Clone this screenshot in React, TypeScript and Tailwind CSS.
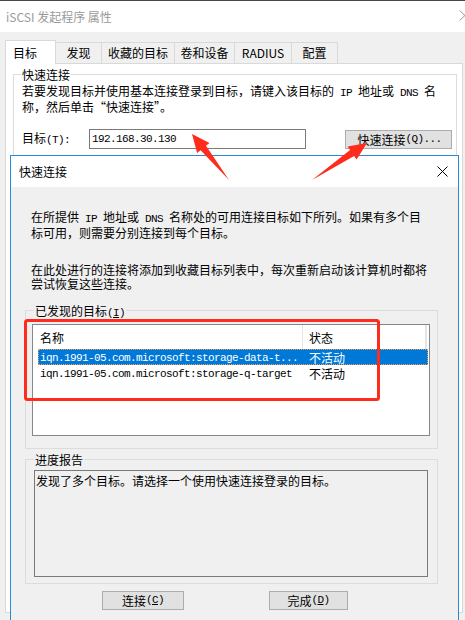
import React from 'react';

// mono run: SimSun-like half-width latin (6px advance)
const M: React.FC<{ children: React.ReactNode }> = ({ children }) => (
  <span className="font-['Liberation_Mono',monospace] text-[11px] tracking-[-0.6px]">{children}</span>
);

const TABS = [
  { label: '发现', w: 'w-[46px]' },
  { label: '收藏的目标', w: 'w-[73px]' },
  { label: '卷和设备', w: 'w-[60px]' },
  { label: 'RADIUS', w: 'w-[57px]' },
  { label: '配置', w: 'w-[46px]' },
];

const TARGETS = [
  { name: 'iqn.1991-05.com.microsoft:storage-data-t...', status: '不活动', selected: true },
  { name: 'iqn.1991-05.com.microsoft:storage-q-target', status: '不活动', selected: false },
];

const App: React.FC = () => {
  return (
    <div className="relative w-[465px] h-[620px] overflow-hidden bg-[#f0f0f0] text-black text-[12px] leading-[13px] font-['Noto_Sans_CJK_SC',sans-serif]">
      {/* Outer window title */}
      <div className="h-[32px] bg-white border-t border-[#474747] flex items-center pl-[6px] text-[#9a9a9a] text-[12px]">
        iSCSI 发起程序 属性
      </div>

      {/* Tabs */}
      <div className="mt-[8px] ml-[5px] h-[24px] -mb-px flex items-end relative z-10">
        <div className="w-[51px] h-[24px] bg-white border-x border-t border-[#d9d9d9] pl-[7px] pt-[4px] leading-[16px]">目标</div>
        {TABS.map((t) => (
          <div key={t.label} className={`${t.w} h-[21px] mb-px border-t border-r border-[#d9d9d9] flex items-center justify-center leading-[16px]`}>
            {t.label}
          </div>
        ))}
      </div>

      {/* Tab panel */}
      <div className="ml-[5px] w-[458px] h-[550px] bg-white border border-[#d9d9d9] pt-[10px] pl-[7px]">
        <div className="relative w-[444px] h-[200px] border border-[#dcdcdc] pt-[9px] pl-[8px]">
          <span className="absolute -top-[7px] left-[7px] bg-white px-px leading-[13px]">快速连接</span>
          <div className="whitespace-nowrap">
            <div>若要发现目标并使用基本连接登录到目标，请键入该目标的<M> IP </M>地址或<M> DNS </M>名</div>
            <div>称，然后单击“快速连接”。</div>
          </div>
          <div className="mt-[16px] flex items-center">
            <span className="w-[67px]">目标<M>(T):</M></span>
            <div className="w-[217px] h-[20px] border border-[#7a7a7a] bg-white flex items-center pl-[2px]">
              <M>192.168.30.130</M>
            </div>
            <button className="ml-[39px] w-[107px] h-[19px] bg-[#e1e1e1] border border-[#adadad] flex items-center justify-center pl-[2px]">
              快速连接<M>(Q)...</M>
            </button>
          </div>
        </div>
      </div>

      {/* Quick connect dialog */}
      <div className="absolute left-[10px] top-[155px] w-[449px] h-[480px] border border-[#2b8ad6] bg-[#f0f0f0]">
        <div className="h-[31px] bg-white flex items-center justify-between pl-[8px] pr-[10px]">
          <span className="leading-[16px]">快速连接</span>
          <svg width="11" height="11" viewBox="0 0 11 11">
            <path d="M0.5 0.5 L10.5 10.5 M10.5 0.5 L0.5 10.5" stroke="#000" strokeWidth="1" fill="none" />
          </svg>
        </div>

        <div className="pt-[23px] pl-[20px] whitespace-nowrap">
          <div>在所提供<M> IP </M>地址或<M> DNS </M>名称处的可用连接目标如下所列。如果有多个目</div>
          <div>标可用，则需要分别连接到每个目标。</div>
          <div className="mt-[24px]">在此处进行的连接将添加到收藏目标列表中，每次重新启动该计算机时都将</div>
          <div className="mt-px">尝试恢复这些连接。</div>
        </div>

        {/* Discovered targets */}
        <div className="relative ml-[14px] mt-[20px] w-[413px] h-[139px] border border-[#dcdcdc] pt-[13px] pl-[6px]">
          <span className="absolute -top-[7px] left-[8px] bg-[#f0f0f0] px-px">
            已发现的目标<M>(<u>I</u>)</M>
          </span>
          <div className="w-[398px] h-[112px] border border-[#828790] bg-white">
            <div className="h-[24px] flex">
              <div className="w-[270px] border-r border-[#e5e5e5] pl-[7px] flex items-center">名称</div>
              <div className="w-[124px] border-r-2 border-[#e5e5e5] pl-[6px] flex items-center">状态</div>
            </div>
            <div className="ml-[5px] w-[390px]">
              {TARGETS.map((r) => (
                <div
                  key={r.name}
                  className={`h-[16px] flex items-center whitespace-nowrap ${r.selected ? 'bg-[#0078d7] text-white outline-1 outline-dotted outline-[#f0a050] -outline-offset-1' : ''}`}
                >
                  <span className="w-[271px] pl-[2px]"><M>{r.name}</M></span>
                  <span>{r.status}</span>
                </div>
              ))}
            </div>
          </div>
        </div>

        {/* Progress report */}
        <div className="relative ml-[14px] mt-[10px] w-[413px] h-[125px] border border-[#dcdcdc] pt-[10px] pl-[8px]">
          <span className="absolute -top-[7px] left-[8px] bg-[#f0f0f0] px-px">进度报告</span>
          <div className="w-[394px] h-[107px] border border-[#7a7a7a] pt-[3px] pl-px">
            发现了多个目标。请选择一个使用快速连接登录的目标。
          </div>
        </div>

        <div className="mt-[7px] flex">
          <button className="ml-[91px] w-[82px] h-[19px] bg-[#e1e1e1] border border-[#adadad] flex items-center justify-center">
            连接<M>(<u>C</u>)</M>
          </button>
          <button className="ml-[85px] w-[79px] h-[19px] bg-[#e1e1e1] border border-[#adadad] flex items-center justify-center">
            完成<M>(<u>D</u>)</M>
          </button>
        </div>
      </div>

      {/* Annotations */}
      <svg className="absolute left-0 top-0 pointer-events-none" width="465" height="620" viewBox="0 0 465 620">
        <path d="M459.5 10.5 L465 15.5 L459.5 20.5" stroke="#9a9a9a" strokeWidth="1" fill="none" />
        <rect x="25.5" y="320.5" width="353" height="79" rx="2" fill="none" stroke="#ff2b1c" strokeWidth="3" />
        <polygon points="192,134 209.5,143 206,145.8 229,180 200.6,150.2 197.1,153" fill="#ff2b1c" />
        <polygon points="367,143 356.6,159.6 354.1,155.9 312,180 350.1,150.1 347.6,146.4" fill="#ff2b1c" />
      </svg>
    </div>
  );
};

export default App;
